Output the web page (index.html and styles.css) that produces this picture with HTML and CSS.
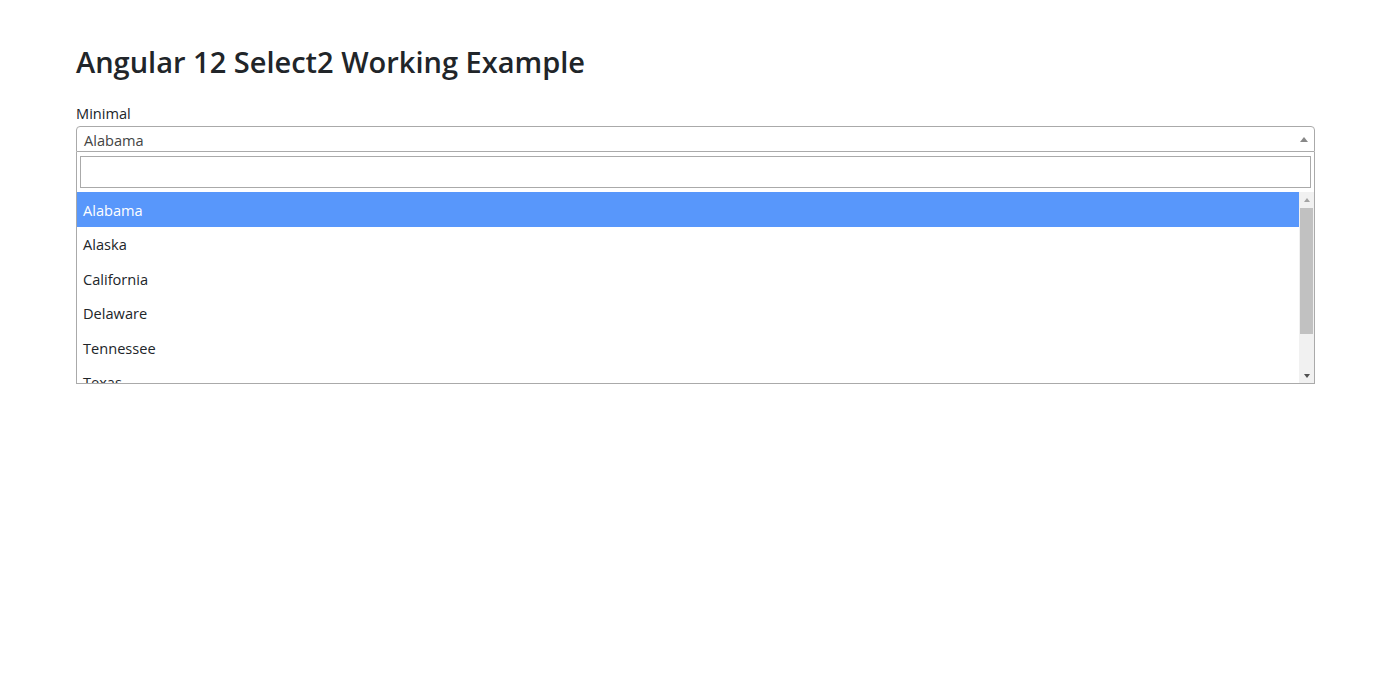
FILE: index.html
```html
<!DOCTYPE html>
<html lang="en">
<head>
<meta charset="utf-8">
<title>Angular 12 Select2 Working Example</title>
<link rel="stylesheet" href="styles.css">
</head>
<body>
<div class="page">
  <h2 class="title">Angular 12 Select2 Working Example</h2>
  <label class="label">Minimal</label>
  <div class="select2">
    <div class="selection">
      <span class="rendered">Alabama</span>
      <span class="arrow"></span>
    </div>
    <div class="dropdown">
      <div class="search-wrap"><input class="search" type="text"></div>
      <div class="results-wrap">
        <ul class="results">
          <li class="option highlighted">Alabama</li>
          <li class="option">Alaska</li>
          <li class="option">California</li>
          <li class="option">Delaware</li>
          <li class="option">Tennessee</li>
          <li class="option">Texas</li>
        </ul>
        <div class="scrollbar">
          <div class="sb-btn"><span class="tri-up"></span></div>
          <div class="sb-track"><div class="sb-thumb"></div></div>
          <div class="sb-btn"><span class="tri-down"></span></div>
        </div>
      </div>
    </div>
  </div>
</div>
</body>
</html>
```
FILE: styles.css
```css
* { box-sizing: border-box; }
html, body { margin: 0; padding: 0; background: #fff; }
body {
  font-family: "Open Sans", "Noto Sans", "Liberation Sans", sans-serif;
  color: #212529;
}
.page {
  padding: 43px 85px 0 76px;
}
.title {
  margin: 0 0 22px 0;
  font-size: 29px;
  font-weight: 600;
  line-height: 37px;
  color: #212529;
}
.label {
  display: block;
  font-size: 14.6px;
  line-height: 23px;
  height: 24px;
  color: #212529;
}
.select2 {
  width: 1239px;
}
.selection {
  height: 26px;
  border: 1px solid #aaa;
  border-radius: 4px 4px 0 0;
  display: flex;
  align-items: center;
  justify-content: space-between;
  padding: 1px 6px 0 7px;
}
.rendered {
  font-size: 14.6px;
  line-height: 24px;
  color: #444;
}
.arrow {
  width: 0;
  height: 0;
  margin-bottom: 1px;
  border-left: 4px solid transparent;
  border-right: 4px solid transparent;
  border-bottom: 5px solid #888;
}
.dropdown {
  border: 1px solid #aaa;
  border-top: none;
}
.search-wrap {
  padding: 4px 3px 4px 3px;
}
.search {
  display: block;
  width: 100%;
  height: 32px;
  border: 1px solid #aaa;
  margin: 0;
  outline: none;
  font: inherit;
}
.results-wrap {
  display: flex;
  height: 191px;
  overflow: hidden;
}
.results {
  flex: 1;
  list-style: none;
  margin: 0;
  padding: 0;
  overflow: hidden;
}
.option {
  padding: 6.5px 6px 5px 6px;
  font-size: 14.6px;
  line-height: 23px;
  color: #212529;
}
.option.highlighted {
  background: #5897fb;
  color: #fff;
}
.scrollbar {
  width: 15px;
  background: #f1f1f1;
  display: flex;
  flex-direction: column;
}
.sb-btn {
  height: 15px;
  display: flex;
  align-items: center;
  justify-content: center;
}
.tri-up {
  width: 0; height: 0;
  border-left: 3.5px solid transparent;
  border-right: 3.5px solid transparent;
  border-bottom: 4px solid #a3a3a3;
}
.tri-down {
  width: 0; height: 0;
  border-left: 3.5px solid transparent;
  border-right: 3.5px solid transparent;
  border-top: 4px solid #505050;
}
.sb-track {
  flex: 1;
  padding: 1px 1px 0 1px;
}
.sb-thumb {
  height: 126px;
  background: #c1c1c1;
}
```
